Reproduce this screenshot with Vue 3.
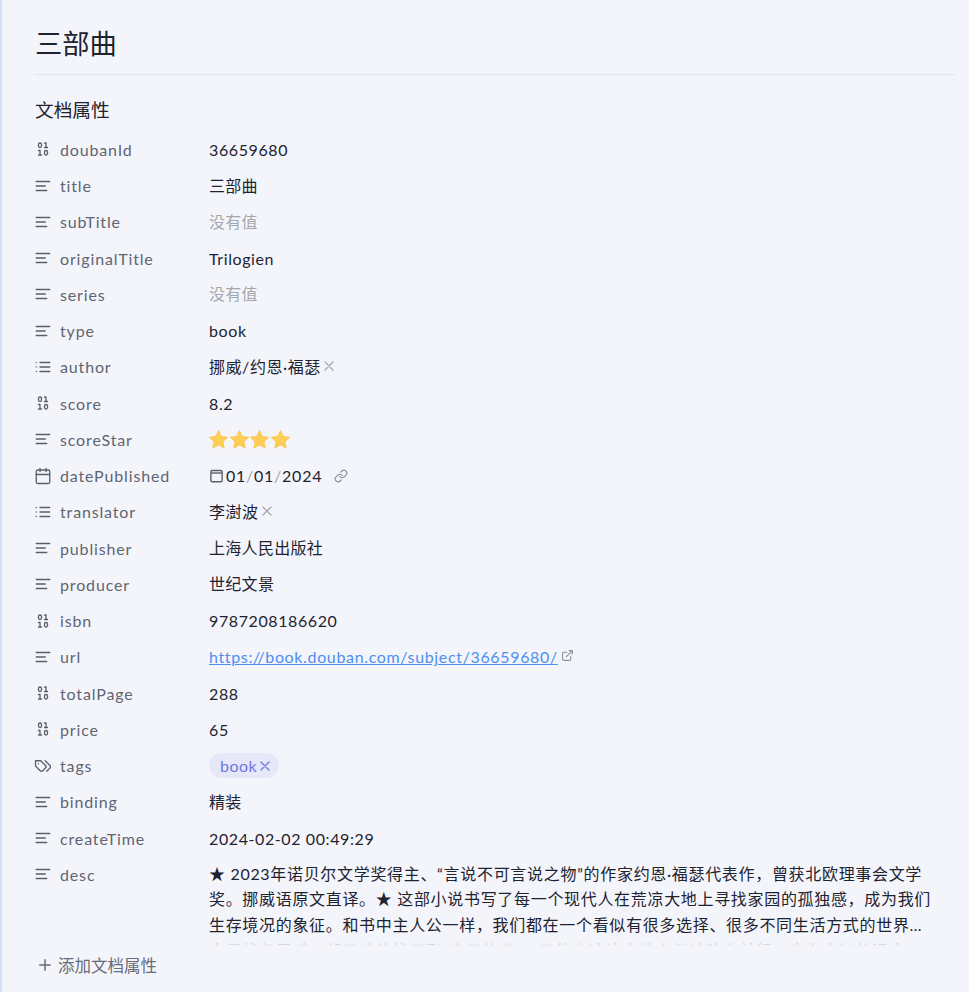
<script setup>
const rows = [
  { icon: 'num', name: 'doubanId', kind: 'plain', value: '36659680' },
  { icon: 'text', name: 'title', kind: 'cjk', value: '三部曲' },
  { icon: 'text', name: 'subTitle', kind: 'empty', value: '没有值' },
  { icon: 'text', name: 'originalTitle', kind: 'plain', value: 'Trilogien' },
  { icon: 'text', name: 'series', kind: 'empty', value: '没有值' },
  { icon: 'text', name: 'type', kind: 'plain', value: 'book' },
  { icon: 'list', name: 'author', kind: 'pill', value: '挪威/约恩·福瑟' },
  { icon: 'num', name: 'score', kind: 'plain', value: '8.2' },
  { icon: 'text', name: 'scoreStar', kind: 'stars', value: '' },
  { icon: 'date', name: 'datePublished', kind: 'date', value: '' },
  { icon: 'list', name: 'translator', kind: 'pill', value: '李澍波' },
  { icon: 'text', name: 'publisher', kind: 'cjk', value: '上海人民出版社' },
  { icon: 'text', name: 'producer', kind: 'cjk', value: '世纪文景' },
  { icon: 'num', name: 'isbn', kind: 'plain', value: '9787208186620' },
  { icon: 'text', name: 'url', kind: 'link', value: 'https://book.douban.com/subject/36659680/' },
  { icon: 'num', name: 'totalPage', kind: 'plain', value: '288' },
  { icon: 'num', name: 'price', kind: 'plain', value: '65' },
  { icon: 'tags', name: 'tags', kind: 'tag', value: 'book' },
  { icon: 'text', name: 'binding', kind: 'cjk', value: '精装' },
  { icon: 'text', name: 'createTime', kind: 'plain', value: '2024-02-02 00:49:29' },
]
const descLines = [
  '★ 2023年诺贝尔文学奖得主、“言说不可言说之物”的作家约恩·福瑟代表作\uFF0C曾获北欧理事会文学',
  '奖。挪威语原文直译。★ 这部小说书写了每一个现代人在荒凉大地上寻找家园的孤独感\uFF0C成为我们',
  '生存境况的象征。和书中主人公一样\uFF0C我们都在一个看似有很多选择、很多不同生活方式的世界…',
  '中寻找归属感\uFF0C却又始终找不到“真正的家”\uFF0C只能在这片土地上继续独自前行\uFF0C走向未知的远方',
]
</script>

<template>
  <div class="page">
    <h1 class="title">三部曲</h1>
    <div class="rule"></div>
    <h2 class="heading">文档属性</h2>
    <div class="props">
      <div v-for="r in rows" :key="r.name" class="row">
        <div class="key">
          <svg class="ic" viewBox="0 0 24 24">
            <template v-if="r.icon === 'num'">
              <rect x="14" y="14" width="4" height="6" rx="2" />
              <rect x="6" y="4" width="4" height="6" rx="2" />
              <path d="M6 20h4M14 10h4M6 14h2v6M14 4h2v6" />
            </template>
            <path v-else-if="r.icon === 'text'" d="M15 12H3M17 18H3M21 6H3" />
            <path v-else-if="r.icon === 'list'" d="M3 12h.01M3 18h.01M3 6h.01M8 12h13M8 18h13M8 6h13" />
            <template v-else-if="r.icon === 'date'">
              <rect x="3" y="4" width="18" height="18" rx="2" />
              <path d="M8 2v4M16 2v4M3 10h18" />
            </template>
            <template v-else>
              <path d="M9 5H2v7l6.29 6.29c.94.94 2.48.94 3.42 0l3.58-3.58c.94-.94.94-2.48 0-3.42L9 5Z" />
              <path d="M6 9.01V9M15 5l6.3 6.3a2.4 2.4 0 0 1 0 3.4L17 19" />
            </template>
          </svg>
          <span class="name">{{ r.name }}</span>
        </div>
        <div class="val">
          <span v-if="r.kind === 'plain'" class="plain">{{ r.value }}</span>
          <span v-else-if="r.kind === 'cjk'" class="cjk">{{ r.value }}</span>
          <span v-else-if="r.kind === 'empty'" class="cjk empty">{{ r.value }}</span>
          <span v-else-if="r.kind === 'pill'" class="pill">
            {{ r.value }}
            <svg class="x" viewBox="0 0 24 24"><path d="M18 6 6 18M6 6l12 12" /></svg>
          </span>
          <span v-else-if="r.kind === 'stars'" class="stars">
            <svg v-for="n in 4" :key="n" class="star" viewBox="0 0 24 24">
              <path d="M12 1.600l3.200 6.900 7.400.9-5.500 5.100 1.500 7.400L12 18.200l-6.600 3.700 1.500-7.400L1.400 9.400l7.400-.9z" />
            </svg>
          </span>
          <span v-else-if="r.kind === 'date'" class="date">
            <svg class="cal" viewBox="0 0 24 24">
              <rect x="3" y="4" width="18" height="18" rx="2" />
              <path d="M3 8h18" />
            </svg>
            <span class="dtext">01<i>/</i>01<i>/</i>2024</span>
            <svg class="chain" viewBox="0 0 24 24">
              <path d="M10 13a5 5 0 0 0 7.540.540l3-3a5 5 0 0 0-7.070-7.070l-1.720 1.710" />
              <path d="M14 11a5 5 0 0 0-7.540-.540l-3 3a5 5 0 0 0 7.070 7.070l1.710-1.710" />
            </svg>
          </span>
          <span v-else-if="r.kind === 'link'" class="linkwrap">
            <a class="link">{{ r.value }}</a>
            <svg class="ext" viewBox="0 0 24 24">
              <path d="M15 3h6v6M10 14 21 3M18 13v6a2 2 0 0 1-2 2H5a2 2 0 0 1-2-2V8a2 2 0 0 1 2-2h6" />
            </svg>
          </span>
          <span v-else class="tag">
            {{ r.value }}
            <svg class="tagx" viewBox="0 0 24 24"><path d="M18 6 6 18M6 6l12 12" /></svg>
          </span>
        </div>
      </div>
      <div class="row descrow">
        <div class="key">
          <svg class="ic" viewBox="0 0 24 24"><path d="M15 12H3M17 18H3M21 6H3" /></svg>
          <span class="name">desc</span>
        </div>
        <div class="desc">
          <div v-for="(l, i) in descLines" :key="i" class="dline">{{ l }}</div>
        </div>
      </div>
    </div>
    <div class="add">
      <svg class="plus" viewBox="0 0 24 24"><path d="M5 12h14M12 5v14" /></svg>
      <span>添加文档属性</span>
    </div>
  </div>
</template>

<style>
html, body { margin: 0; background: #f4f5fb; overflow: hidden; }
</style>

<style scoped>
.page {
  position: relative;
  box-sizing: border-box;
  width: 969px;
  height: 992px;
  overflow: hidden;
  background: #f4f5fb;
  border-left: 2px solid #d3e0f4;
  padding: 0 14px 0 32px;
  color: #1d2330;
  font-family: "Lato", "Noto Sans CJK SC", sans-serif;
}
.title {
  margin: 0;
  padding-left: 1px;
  height: 74px;
  line-height: 88px;
  font-size: 27.3px;
  font-weight: 400;
}
.rule { height: 1px; background: #e1e3f1; }
.heading {
  margin: 0;
  padding: 22px 0 0 1px;
  height: 34.3px;
  line-height: 26px;
  font-size: 18.7px;
  font-weight: 400;
}
.props { display: flex; flex-direction: column; }
.row {
  display: flex;
  align-items: center;
  height: 36.25px;
  flex: none;
}
.key {
  display: flex;
  align-items: center;
  width: 175px;
  flex: none;
  color: #5f6572;
  font-size: 16px;
  letter-spacing: 0.85px;
}
.ic {
  width: 18px;
  height: 18px;
  margin-right: 8px;
  flex: none;
  fill: none;
  stroke: #5a5f6c;
  stroke-width: 1.75;
  stroke-linecap: round;
  stroke-linejoin: round;
}
.val {
  font-size: 16px;
  display: flex;
  align-items: center;
  min-width: 0;
}
.plain { letter-spacing: 0.6px; }
.cjk { letter-spacing: 0.3px; margin-bottom: 2px; }
.empty { color: #a4a7ae; }
.pill { display: inline-flex; align-items: center; letter-spacing: 0.55px; margin-bottom: 2px; }
.x { width: 16px; height: 16px; fill: none; stroke: #a7a9b0; stroke-width: 2; stroke-linecap: round; }
.stars { display: inline-flex; margin-left: -1px; }
.star { width: 21px; height: 21px; margin-right: -0.4px; fill: #ffcf55; stroke: #f9bd3e; stroke-width: 0.8; stroke-linejoin: round; }
.date { display: inline-flex; align-items: center; }
.cal { width: 15px; height: 15px; margin-right: 2px; fill: none; stroke: #5a5f6c; stroke-width: 2.2; }
.dtext { letter-spacing: 0.75px; }
.dtext i { font-style: normal; color: #a4a7ae; }
.chain { width: 14px; height: 14px; margin-left: 12px; fill: none; stroke: #8d919c; stroke-width: 2; stroke-linecap: round; }
.linkwrap { display: inline-flex; align-items: center; }
.link { color: #4d8ff0; text-decoration: underline; letter-spacing: 0.65px; }
.ext { width: 13px; height: 13px; margin-left: 3px; margin-top: -3px; fill: none; stroke: #8d919c; stroke-width: 2; stroke-linecap: round; stroke-linejoin: round; }
.tag {
  display: inline-flex;
  align-items: center;
  height: 25px;
  padding: 0 6px 0 11px;
  border-radius: 13px;
  background: #e6e7f9;
  color: #6f78e3;
  letter-spacing: 0.5px;
}
.tagx { width: 16px; height: 16px; fill: none; stroke: #6f78e3; stroke-width: 2; stroke-linecap: round; }
.descrow { align-items: flex-start; height: auto; }
.descrow .key { height: 36.25px; }
.desc { width: 724px; padding-top: 4.6px; font-size: 16px; line-height: 25.6px; letter-spacing: 0.68px; }
.dline { white-space: nowrap; overflow: hidden; }
.add {
  position: absolute;
  left: 32px;
  bottom: 0;
  right: 0;
  height: 51px;
  padding: 5px 0 8px;
  box-sizing: border-box;
  display: flex;
  align-items: center;
  gap: 4px;
  font-size: 16.5px;
  color: #676c78;
  background: linear-gradient(to bottom, rgba(244, 245, 251, 0.55) 0, #f4f5fb 5px);
}
.plus { width: 18px; height: 18px; margin-left: 2px; fill: none; stroke: #676c78; stroke-width: 2; stroke-linecap: round; }
</style>
